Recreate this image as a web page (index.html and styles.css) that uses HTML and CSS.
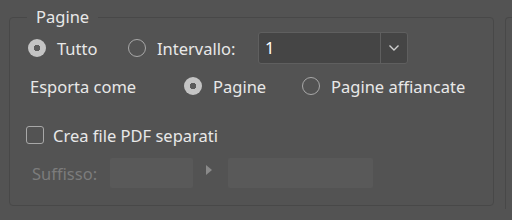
FILE: index.html
```html
<!DOCTYPE html>
<html lang="it">
<head>
    <meta charset="UTF-8">
    <title>Pagine</title>
    <link rel="stylesheet" href="styles.css">
</head>
<body>
    <div class="panel">
        <fieldset class="pages">
            <legend>Pagine</legend>

            <div class="row range-row">
                <label class="opt opt-all"><input type="radio" name="range" checked> Tutto</label>
                <label class="opt opt-range"><input type="radio" name="range"> Intervallo:</label>
                <div class="select">
                    <span class="select-value">1</span>
                    <span class="select-btn">
                        <svg width="12" height="8" viewBox="0 0 12 8"><path d="M1.5 1.5 L6 6 L10.5 1.5" fill="none" stroke="#cfcfcf" stroke-width="1.4"/></svg>
                    </span>
                </div>
            </div>

            <div class="row export-row">
                <span class="caption">Esporta come</span>
                <label class="opt opt-pages"><input type="radio" name="export" checked> Pagine</label>
                <label class="opt"><input type="radio" name="export"> Pagine affiancate</label>
            </div>

            <div class="row check-row">
                <label class="opt"><input type="checkbox"> Crea file PDF separati</label>
            </div>

            <div class="row suffix-row">
                <span class="caption disabled">Suffisso:</span>
                <span class="field field-short"></span>
                <span class="arrow"></span>
                <span class="field field-long"></span>
            </div>
        </fieldset>
        <div class="next-panel"></div>
    </div>
</body>
</html>
```

FILE: styles.css
```css
body {
    margin: 0;
    background-color: #535353;
    font-family: "Noto Sans", "Open Sans", sans-serif;
    font-size: 16.5px;
    color: #e8e8e8;
}
.panel {
    display: flex;
    padding-left: 9px;
    padding-top: 7px;
}
.pages {
    margin: 0;
    width: 490px;
    height: 199px;
    box-sizing: border-box;
    border: 1px solid #484848;
    border-radius: 4px;
    padding: 5px 0 0 18px;
}
.pages legend {
    margin-left: -1px;
    padding: 0 9px;
    line-height: 20px;
}
.next-panel {
    margin-left: 11px;
    margin-top: 10px;
    width: 6px;
    height: 191px;
    border-left: 1px solid #484848;
    border-top: 1px solid #484848;
    border-top-left-radius: 4px;
}
.row {
    display: flex;
    align-items: center;
}
.opt {
    display: flex;
    align-items: center;
    white-space: nowrap;
}
input[type="radio"] {
    appearance: none;
    margin: 0 11px 0 0;
    width: 18px;
    height: 18px;
    border: 1.5px solid #a8a8a8;
    border-radius: 50%;
    box-sizing: border-box;
}
input[type="radio"]:checked {
    border: none;
    background: radial-gradient(circle, #5c5c5c 0 3px, #c4c4c4 3.5px);
}
input[type="checkbox"] {
    appearance: none;
    margin: 0 9px 0 0;
    width: 18px;
    height: 18px;
    border: 1.5px solid #a8a8a8;
    border-radius: 3px;
    box-sizing: border-box;
}
.range-row {
    height: 32px;
}
.opt-all {
    width: 100px;
}
.opt-range {
    width: 130px;
}
.select {
    display: flex;
    width: 150px;
    height: 32px;
    box-sizing: border-box;
    border: 1px solid #5f5f5f;
    border-radius: 3px;
    background-color: #454545;
}
.select-value {
    flex: 1;
    padding-left: 6px;
    line-height: 30px;
    color: #ffffff;
}
.select-btn {
    width: 26px;
    border-left: 1px solid #5f5f5f;
    display: flex;
    align-items: center;
    justify-content: center;
}
.export-row {
    margin-top: 7px;
    height: 30px;
}
.export-row .caption {
    margin-left: 2px;
    width: 154px;
}
.opt-pages {
    width: 118px;
}
.check-row {
    margin-top: 22px;
    height: 24px;
}
.check-row .opt {
    margin-left: -2px;
}
.suffix-row {
    margin-top: 11px;
    height: 30px;
}
.caption.disabled {
    color: #7c7c7c;
    margin-left: 4px;
    width: 78px;
}
.field {
    height: 30px;
    background-color: #595959;
    border-radius: 2px;
}
.field-short {
    width: 83px;
}
.field-long {
    width: 145px;
}
.arrow {
    margin: -7px 16px 0 13px;
    width: 0;
    height: 0;
    border-top: 5px solid transparent;
    border-bottom: 5px solid transparent;
    border-left: 6px solid #8a8a8a;
}
```
